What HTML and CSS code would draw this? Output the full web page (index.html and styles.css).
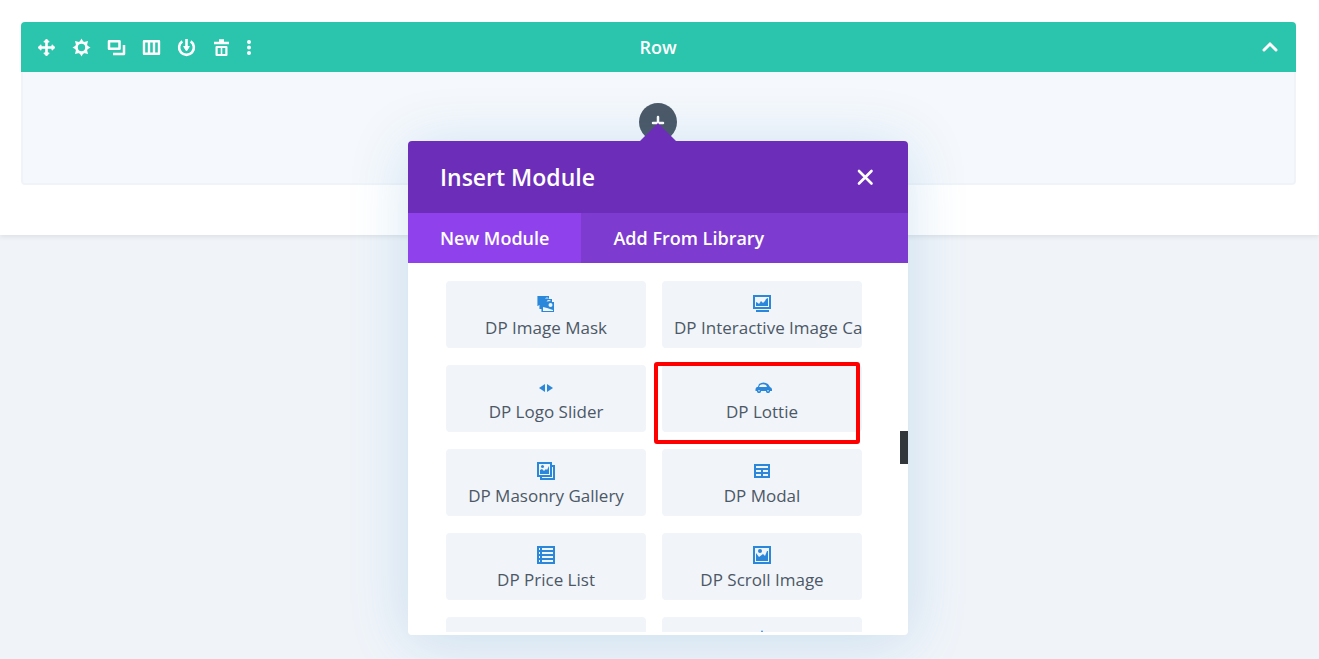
FILE: index.html
```html
<!DOCTYPE html>
<html lang="en">
<head>
<meta charset="utf-8">
<title>Insert Module</title>
<link rel="stylesheet" href="styles.css">
</head>
<body>
<main class="section">
  <section class="row">
    <header class="row-header">
      <div class="tools">
        <button class="tool" aria-label="Move"><svg viewBox="0 0 20 20"><path d="M10.5 3v15M3 10.500h15" stroke="#fff" stroke-width="2.600"/><path fill="#fff" stroke="#fff" stroke-linejoin="round" d="M10.500 2l2.700 3H7.800zM10.500 19l2.700-3H7.800zM2 10.500l3-2.700v5.400zM19 10.500l-3-2.700v5.400z"/></svg></button>
        <button class="tool" aria-label="Settings"><svg viewBox="0 0 20 20"><circle cx="10.500" cy="10.500" r="5" fill="none" stroke="#fff" stroke-width="2.600"/><path fill="#fff" d="M8.500 5l2-3.500 2 3.500zM8.500 16l2 3.500 2-3.500zM5 8.500l-3.500 2 3.500 2zM16 8.500l3.500 2-3.500 2zM5 8l-1-4 4 1zM13 5l4-1-1 4zM16 13l1 4-4-1zM8 16l-4 1 1-4z"/></svg></button>
        <button class="tool" aria-label="Duplicate"><svg viewBox="0 0 20 20" fill="none" stroke="#fff" stroke-width="2.500" stroke-linejoin="round"><rect x="3" y="4.200" width="10.500" height="7.500"/><path d="M18 8v9H7"/></svg></button>
        <button class="tool" aria-label="Columns"><svg viewBox="0 0 20 20" fill="none" stroke="#fff" stroke-width="2.400" stroke-linejoin="round"><path d="M3 4.200h15v12.600H3zM8 4v13M13 4v13"/></svg></button>
        <button class="tool" aria-label="Save to library"><svg viewBox="0 0 20 20" fill="none" stroke="#fff" stroke-width="2.600"><path d="M6.300 4.400a7.400 7.400 0 1 0 8.400 0M10.500 2v8"/><path fill="#fff" stroke-width="1" stroke-linejoin="round" d="M7.700 9.500h5.600l-2.800 4.500z"/></svg></button>
        <button class="tool" aria-label="Delete"><svg viewBox="0 0 20 20" fill="none" stroke="#fff"><path stroke-width="2.600" stroke-linejoin="round" d="M3 6h15M8 3.500h5"/><path stroke-width="2.200" stroke-linejoin="round" d="M5.600 10h9.800v8H5.600z"/><path stroke-width="1.600" d="M10.500 10v8"/></svg></button>
        <button class="tool tool-narrow" aria-label="More"><svg viewBox="0 0 6 20" fill="#fff"><circle cx="3" cy="5" r="2"/><circle cx="3" cy="10.500" r="2"/><circle cx="3" cy="16" r="2"/></svg></button>
      </div>
      <h2 class="row-title">Row</h2>
      <button class="tool collapse" aria-label="Collapse"><svg viewBox="0 0 20 20" fill="none" stroke="#fff" stroke-width="3" stroke-linecap="round"><path d="M4 13l6-6 6 6"/></svg></button>
    </header>
    <div class="row-body">
      <div class="inserter">
        <button class="add" aria-label="Add module"><svg viewBox="0 0 14 14" stroke="#fff" stroke-width="2.500" stroke-linecap="round"><path d="M7 2v10M2 8h10"/></svg></button>
        <div class="modal" role="dialog" aria-labelledby="modal-title">
          <header class="modal-header">
            <h1 class="modal-title" id="modal-title">Insert Module</h1>
            <button class="tool" aria-label="Close"><svg viewBox="0 0 20 20" stroke="#fff" stroke-width="2.600" stroke-linecap="round"><path d="M4 4l12.500 12.500M16.500 4L4 16.500"/></svg></button>
          </header>
          <nav class="tabs">
            <button class="tab tab-active">New Module</button>
            <button class="tab">Add From Library</button>
          </nav>
          <div class="list">
            <button class="card"><svg class="icon" viewBox="0 0 20 20"><path fill="#7db6ea" d="M1 3h2v10H1zM3 12h2v4H3zM5 15h1v4H5z"/><path fill="#2b87da" fill-rule="evenodd" d="M2 3h11v3h3v3h2v10H6v-3H4v-4H2zM7 14v4h10v-1l-6-2z"/><path fill="#f1f4f9" d="M9 5.500q2-2 4 0zM10.500 8.500q2-2.500 4.500-.5z"/><circle cx="14.500" cy="12" r="2" fill="#f1f4f9"/></svg><span>DP Image Mask</span></button>
            <button class="card card-overflow"><svg class="icon" viewBox="0 0 20 20"><path fill="none" stroke="#2b87da" stroke-width="2" d="M2 3h16v12H2z"/><path fill="#2b87da" d="M4 13V9l2 1 1 1 2-3 2 2 2-2 1-2 2-1v8zM4 17h13v2H4z"/></svg><span>DP Interactive Image Ca</span></button>
            <button class="card"><svg class="icon" viewBox="0 0 20 20"><path fill="#2b87da" d="M9 6v8l-6-4zM11 6v8l6-4z" transform="translate(0 1)"/></svg><span>DP Logo Slider</span></button>
            <div class="marked">
              <button class="card"><svg class="icon" viewBox="0 0 20 20"><g transform="translate(1 1)"><path fill="#2b87da" fill-rule="evenodd" d="M6 6q4.500-3 9 0l2 3q2 .5 2 2.500V13h-2a2 2 0 0 1-4 0H8a2 2 0 0 1-4 0H2.500v-2Q2.500 9 5 8.700zM7 7L6 9h8l-1-2q-3-1.500-6 0z"/><circle cx="6" cy="13.200" r="1.700" fill="#2b87da"/><circle cx="15" cy="13.200" r="1.700" fill="#2b87da"/><circle cx="6" cy="12.800" r=".7" fill="#fff"/><circle cx="15" cy="12.800" r=".7" fill="#fff"/></g></svg><span>DP Lottie</span></button>
            </div>
            <button class="card"><svg class="icon" viewBox="0 0 20 20"><path fill="none" stroke="#2b87da" stroke-width="2" d="M2 2h13v13H2zM16 5h2v13H5v-2"/><circle cx="6.500" cy="5.500" r="1.500" fill="#2b87da"/><path fill="#2b87da" d="M4 13V9l2-1 2 2 2-2 1 1 2-4v8z"/></svg><span>DP Masonry Gallery</span></button>
            <button class="card"><svg class="icon" viewBox="0 0 20 20"><path fill="#2b87da" fill-rule="evenodd" d="M2 3h16v14H2zM4 5v2h12V5zM4 9v2h5V9zM11 9v2h5V9zM4 13v2h5v-2zM11 13v2h5v-2z"/></svg><span>DP Modal</span></button>
            <button class="card"><svg class="icon" viewBox="0 0 20 20"><path fill="#2b87da" fill-rule="evenodd" d="M1 1h18v18H1zM3 3v2h1V3zM6 3v2h11V3zM3 7v2h1V7zM6 7v2h11V7zM3 11v2h1v-2zM6 11v2h11v-2zM3 15v2h1v-2zM6 15v2h11v-2z"/></svg><span>DP Price List</span></button>
            <button class="card"><svg class="icon" viewBox="0 0 20 20"><path fill="none" stroke="#2b87da" stroke-width="2" d="M2 2h16v16H2z"/><circle cx="8" cy="6" r="2" fill="#2b87da"/><path fill="#2b87da" d="M4 16V8l3 4 4-3 2 2 2-5h1v10z"/></svg><span>DP Scroll Image</span></button>
            <button class="card" aria-label="Next module"></button>
            <button class="card" aria-label="Next module"><svg class="icon" viewBox="0 0 20 20"><path fill="#2b87da" d="M10 1l2 4 5 1-4 4 1 6-4-2-4 2 1-6-4-4 5-1z"/></svg></button>
          </div>
        </div>
      </div>
    </div>
  </section>
</main>
</body>
</html>
```
FILE: styles.css
```css
* {
  box-sizing: border-box;
}

body {
  min-height: 100vh;
  margin: 0;
  background: #f0f4f9;
  font-family: "Open Sans", "Noto Sans", sans-serif;
  color: #4c5866;
}

button {
  margin: 0;
  padding: 0;
  border: 0;
  background: none;
  color: inherit;
  font: inherit;
  cursor: pointer;
}

svg {
  display: block;
}

.section {
  padding: 22px 23px 50px 21px;
  background: #fff;
  box-shadow: 0 2px 5px rgba(0, 0, 0, 0.08);
}

.row {
  border-radius: 4px;
}

.row-header {
  display: grid;
  grid-template-columns: 1fr auto 1fr;
  align-items: center;
  height: 50px;
  padding: 0 16px 0 15px;
  border-radius: 4px 4px 0 0;
  background: #2bc4ac;
  color: #fff;
}

.tools {
  display: flex;
  gap: 15px;
}

.tool {
  width: 20px;
  height: 20px;
}

.tool-narrow {
  width: 6px;
}

.row-title {
  margin: 0;
  font-size: 18px;
  font-weight: 600;
  line-height: 24px;
}

.collapse {
  justify-self: end;
}

.row-body {
  display: flex;
  justify-content: center;
  height: 113px;
  padding: 31px 1px 0 0;
  border: 2px solid #f0f4f9;
  border-top: 0;
  border-radius: 0 0 4px 4px;
  background: #f5f8fc;
}

.inserter {
  position: relative;
  width: 38px;
  height: 38px;
}

.add {
  display: flex;
  align-items: center;
  justify-content: center;
  width: 38px;
  height: 38px;
  border-radius: 50%;
  background: #4c5866;
}

.add svg {
  width: 14px;
  height: 14px;
}

.modal {
  position: absolute;
  top: 38px;
  left: 50%;
  width: 500px;
  margin-left: -250px;
  padding-bottom: 3px;
  border-radius: 4px;
  background: #fff;
  box-shadow: 0 5px 60px rgba(43, 135, 200, 0.2);
}

.modal::before {
  content: "";
  position: absolute;
  top: -18px;
  left: 50%;
  margin-left: -18px;
  border: 18px solid transparent;
  border-top: 0;
  border-bottom-color: #6c2eb9;
}

.modal-header {
  display: flex;
  align-items: center;
  justify-content: space-between;
  height: 72px;
  padding: 0 33px 0 32px;
  border-radius: 4px 4px 0 0;
  background: #6c2eb9;
  color: #fff;
}

.modal-title {
  margin: 0;
  font-size: 23px;
  font-weight: 600;
  line-height: 32px;
}

.tabs {
  display: flex;
  height: 50px;
  background: #7e3bd0;
}

.tab {
  padding: 0 32px;
  color: #fff;
  font-size: 18px;
  font-weight: 600;
}

.tab-active {
  background: #8f42ec;
}

.list {
  display: grid;
  grid-template-columns: 1fr 1fr;
  grid-auto-rows: 67px;
  gap: 17px 16px;
  height: 369px;
  padding: 18px 46px 0 38px;
  overflow: hidden;
  background: linear-gradient(#32373c, #32373c) right 168px / 8px 33px no-repeat;
}

.card {
  display: flex;
  flex-direction: column;
  align-items: center;
  gap: 3px;
  width: 100%;
  min-width: 0;
  height: 67px;
  padding-top: 12px;
  overflow: hidden;
  border-radius: 4px;
  background: #f1f4f9;
  font-size: 17px;
  font-weight: 500;
  line-height: 24px;
  white-space: nowrap;
}

.card-overflow span {
  align-self: flex-start;
  padding-left: 12px;
}

.icon {
  flex: none;
  width: 20px;
  height: 20px;
}

.marked {
  position: relative;
}

.marked::after {
  content: "";
  position: absolute;
  inset: -3px 2px -12px -8px;
  border: 4px solid #f00;
  border-radius: 3px;
}
```
